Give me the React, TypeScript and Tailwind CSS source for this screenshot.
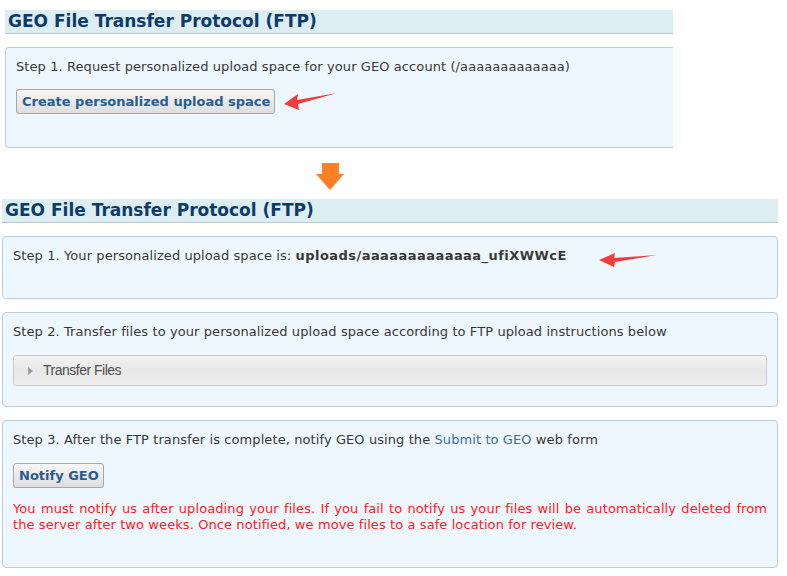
import React from 'react';

const verdana = { fontFamily: '"DejaVu Sans", Verdana, sans-serif' };

function Header({ width }: { width: string }) {
    return (
        <div className={`${width} h-[24px] bg-[#ddeef3] border-b border-[#b8c8d4] flex items-center pl-[3px]`}>
            <h1 className="text-[17px] font-bold text-[#0c3b6c] leading-none tracking-[0px]">
                GEO File Transfer Protocol (FTP)
            </h1>
        </div>
    );
}

function GeoButton({ children }: { children: React.ReactNode }) {
    return (
        <button className="h-[25px] pl-[5px] pr-[4px] border border-[#a8a8a8] rounded-[3px] bg-gradient-to-b from-[#f7f7f7] to-[#dedede] text-[13px] font-bold text-[#2b5c8e] leading-none tracking-normal">
            {children}
        </button>
    );
}

export default function App() {
    return (
        <div className="w-[787px] h-[576px] bg-white text-[13px] text-[#383838] tracking-[0.09px] overflow-hidden" style={verdana}>
            {/* before */}
            <div className="ml-[5px] pt-[10px] w-[668px]">
                <Header width="w-[668px]" />
                <div className="mt-[13px] bg-[#eff7fe] border border-r-0 border-[#b9cde0] rounded-l-[4px] pl-[10px] pt-[11px] pb-[33px]">
                    <p className="leading-[16px]">Step 1. Request personalized upload space for your GEO account (/aaaaaaaaaaaaa)</p>
                    <div className="mt-[14px] flex items-center gap-[8px]">
                        <GeoButton>Create personalized upload space</GeoButton>
                        <svg width="56" height="18" viewBox="0 0 56 18">
                            <path d="M1 11 L15 1 L14 7 L54 0 L15 11 L16 17 Z" fill="#f43b3b" />
                        </svg>
                    </div>
                </div>
            </div>

            {/* orange arrow */}
            <div className="h-[51px] flex items-start pt-[15px] pl-[315px]">
                <svg width="30" height="28" viewBox="0 0 30 28">
                    <path d="M7 0 H24 V11 H29 L15 27 L1 11 H7 Z" fill="#fd8024" />
                </svg>
            </div>

            {/* after */}
            <div className="ml-[2px] w-[776px]">
                <Header width="w-[776px]" />
                <div className="relative mt-[13px] bg-[#eff7fe] border border-[#b9cde0] rounded-[4px] pl-[10px] pt-[11px] pb-[34px]">
                    <p className="leading-[16px]">
                        Step 1. Your personalized upload space is: <b className="tracking-[0.45px]">uploads/aaaaaaaaaaaaa_ufiXWWcE</b>
                    </p>
                    <svg className="absolute left-[595px] top-[15px]" width="60" height="16" viewBox="0 0 60 16">
                        <path d="M1 8 L17 1 L16 6 L59 3 L17 10 L16 15 Z" fill="#f43b3b" />
                    </svg>
                </div>

                <div className="mt-[13px] bg-[#eff7fe] border border-[#b9cde0] rounded-[4px] px-[10px] pt-[11px] pb-[20px]">
                    <p className="leading-[16px]">Step 2. Transfer files to your personalized upload space according to FTP upload instructions below</p>
                    <div className="mt-[15px] h-[31px] border border-[#cbcbcb] rounded-[3px] bg-gradient-to-b from-[#f3f3f3] via-[#e8e8e8] to-[#eeeeee] flex items-center pl-[14px]">
                        <svg width="5" height="8" viewBox="0 0 5 8">
                            <path d="M0 0 L5 4 L0 8 Z" fill="#9a9a9a" />
                        </svg>
                        <span className="ml-[10px] text-[14px] text-[#505050] tracking-[-0.5px]" style={{ fontFamily: '"Liberation Sans", Arial, sans-serif' }}>
                            Transfer Files
                        </span>
                    </div>
                </div>

                <div className="mt-[13px] bg-[#eff7fe] border border-[#b9cde0] rounded-[4px] px-[10px] pt-[11px] pb-[34px]">
                    <p className="leading-[16px]">
                        Step 3. After the FTP transfer is complete, notify GEO using the <span className="text-[#3a6ea5]">Submit to GEO</span> web form
                    </p>
                    <div className="mt-[15px]">
                        <GeoButton>Notify GEO</GeoButton>
                    </div>
                    <p className="mt-[13px] leading-[16px] text-[#ff1a1a] text-justify">
                        You must notify us after uploading your files. If you fail to notify us your files will be automatically deleted from the server after two weeks. Once notified, we move files to a safe location for review.
                    </p>
                </div>
            </div>
        </div>
    );
}
